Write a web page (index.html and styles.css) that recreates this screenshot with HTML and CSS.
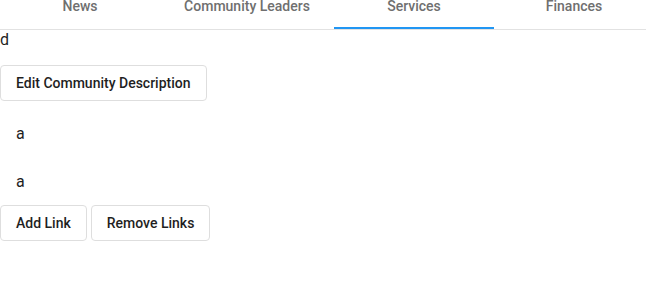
FILE: index.html
```html
<!DOCTYPE html>
<html>
<head>
<meta charset="utf-8">
<link rel="stylesheet" href="styles.css">
</head>
<body>
<div class="tabs">
  <div class="tab">News</div>
  <div class="tab tab-wide">Community Leaders</div>
  <div class="tab tab-selected">Services</div>
  <div class="tab">Finances</div>
</div>
<p class="desc">d</p>
<button class="btn btn-edit">Edit Community Description</button>
<ul class="links">
  <li class="link-item">a</li>
  <li class="link-item">a</li>
</ul>
<div class="actions">
  <button class="btn">Add Link</button>
  <button class="btn">Remove Links</button>
</div>
</body>
</html>
```

FILE: styles.css
```css
html, body {
  margin: 0;
  padding: 0;
  background: #ffffff;
}
body {
  font-family: Roboto, "Liberation Sans", sans-serif;
  color: #1f1f1f;
  width: 646px;
  overflow: hidden;
}
.tabs {
  display: flex;
  border-bottom: 1px solid #e2e2e2;
  overflow: hidden;
  width: 646px;
}
.tab {
  flex: 0 0 160px;
  height: 29px;
  box-sizing: border-box;
  text-align: center;
  font-size: 14px;
  font-weight: 500;
  line-height: 12px;
  color: #6f6f6f;
}
.tab-wide {
  flex-basis: 174px;
}
.tab-selected {
  border-bottom: 2px solid #2196f3;
}
.desc {
  margin: 0;
  font-size: 16px;
  line-height: 19px;
}
.btn {
  display: block;
  box-sizing: border-box;
  height: 36px;
  padding: 0 15px;
  border: 1px solid #dedede;
  border-radius: 4px;
  background: #ffffff;
  font-family: Roboto, "Liberation Sans", sans-serif;
  font-size: 14px;
  font-weight: 500;
  color: #1f1f1f;
  line-height: 20px;
}
.btn-edit {
  margin-top: 16px;
}
.links {
  list-style: none;
  margin: 9px 0 0 0;
  padding: 0;
}
.link-item {
  padding: 12px 16px;
  font-size: 16px;
  line-height: 24px;
}
.actions {
  display: flex;
  gap: 4px;
  margin-top: -1px;
}
```
